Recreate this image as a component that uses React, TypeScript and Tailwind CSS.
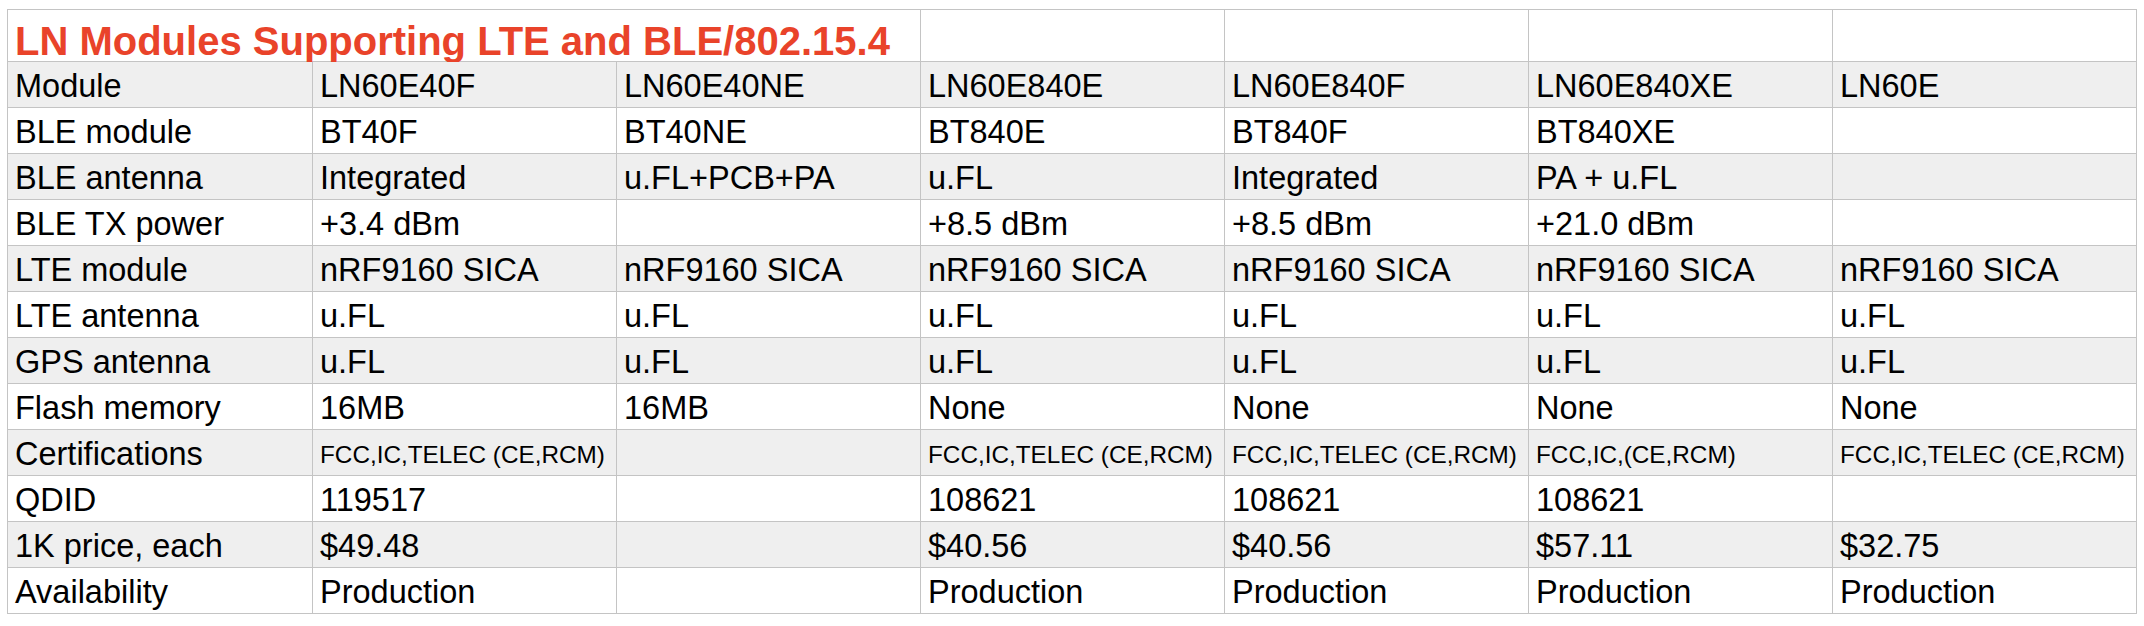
import React from 'react';

const rows: { label: string; values: string[]; small?: boolean }[] = [
  { label: 'Module', values: ['LN60E40F', 'LN60E40NE', 'LN60E840E', 'LN60E840F', 'LN60E840XE', 'LN60E'] },
  { label: 'BLE module', values: ['BT40F', 'BT40NE', 'BT840E', 'BT840F', 'BT840XE', ''] },
  { label: 'BLE antenna', values: ['Integrated', 'u.FL+PCB+PA', 'u.FL', 'Integrated', 'PA + u.FL', ''] },
  { label: 'BLE TX power', values: ['+3.4 dBm', '', '+8.5 dBm', '+8.5 dBm', '+21.0 dBm', ''] },
  { label: 'LTE module', values: Array(6).fill('nRF9160 SICA') },
  { label: 'LTE antenna', values: Array(6).fill('u.FL') },
  { label: 'GPS antenna', values: Array(6).fill('u.FL') },
  { label: 'Flash memory', values: ['16MB', '16MB', 'None', 'None', 'None', 'None'] },
  {
    label: 'Certifications',
    small: true,
    values: [
      'FCC,IC,TELEC (CE,RCM)',
      '',
      'FCC,IC,TELEC (CE,RCM)',
      'FCC,IC,TELEC (CE,RCM)',
      'FCC,IC,(CE,RCM)',
      'FCC,IC,TELEC (CE,RCM)',
    ],
  },
  { label: 'QDID', values: ['119517', '', '108621', '108621', '108621', ''] },
  { label: '1K price, each', values: ['$49.48', '', '$40.56', '$40.56', '$57.11', '$32.75'] },
  { label: 'Availability', values: ['Production', '', 'Production', 'Production', 'Production', 'Production'] },
];

const cell = 'border-r border-b border-[#c4c4c4] px-[7px] flex items-center whitespace-nowrap overflow-hidden';

export default function App() {
  return (
    <div className="w-[2144px] h-[626px] bg-white pl-[7px] pt-[9px] text-black font-['Liberation_Sans',Arial,sans-serif]">
      <div className="grid grid-cols-[305px_304px_304px_304px_304px_304px_304px] w-max border-l border-t border-[#c4c4c4]">
        {/* Title row */}
        <div className="col-span-3 h-[52px] border-r border-b border-[#c4c4c4] px-[7px] flex items-end">
          <h1 className="text-[40px] leading-[40px] font-bold text-[#e9432a] whitespace-nowrap">
            LN Modules Supporting LTE and BLE/802.15.4
          </h1>
        </div>
        <div className="h-[52px] border-r border-b border-[#c4c4c4]"></div>
        <div className="h-[52px] border-r border-b border-[#c4c4c4]"></div>
        <div className="h-[52px] border-r border-b border-[#c4c4c4]"></div>
        <div className="h-[52px] border-r border-b border-[#c4c4c4]"></div>

        {rows.map((row, i) => {
          const bg = i % 2 === 0 ? 'bg-[#efefef]' : 'bg-white';
          return (
            <React.Fragment key={row.label}>
              <div className={`${cell} ${bg} h-[46px] text-[32.5px] pt-[3px]`}>{row.label}</div>
              {row.values.map((v, j) => (
                <div
                  key={j}
                  className={`${cell} ${bg} h-[46px] ${row.small ? 'text-[24.3px] pt-[5px]' : 'text-[32.5px] pt-[3px]'}`}
                >
                  {v}
                </div>
              ))}
            </React.Fragment>
          );
        })}
      </div>
    </div>
  );
}
